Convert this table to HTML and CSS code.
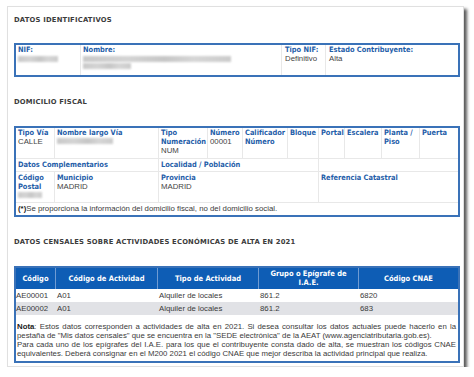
FILE: index.html
```html
<!DOCTYPE html>
<html lang="es">
<head>
<meta charset="utf-8">
<title>Datos censales</title>
<link rel="stylesheet" href="styles.css">
</head>
<body>
<div class="card">
  <h2 class="sec sec-first">DATOS IDENTIFICATIVOS</h2>
  <div class="box idbox">
    <div class="cell"><div class="lbl">NIF:</div><div class="val"><span class="blur b-nif"></span></div></div>
    <div class="cell"><div class="lbl">Nombre:</div><div class="val"><span class="blur b-nom1"></span><span class="blur b-nom2"></span></div></div>
    <div class="cell"><div class="lbl">Tipo NIF:</div><div class="val">Definitivo</div></div>
    <div class="cell"><div class="lbl">Estado Contribuyente:</div><div class="val">Alta</div></div>
  </div>

  <h2 class="sec">DOMICILIO FISCAL</h2>
  <div class="box dombox">
    <div class="cell top"><div class="lbl">Tipo Vía</div><div class="val">CALLE</div></div>
    <div class="cell top"><div class="lbl">Nombre largo Vía</div><div class="val"><span class="blur b-via"></span></div></div>
    <div class="cell top"><div class="lbl">Tipo<br>Numeración</div><div class="val">NUM</div></div>
    <div class="cell top"><div class="lbl">Número</div><div class="val">00001</div></div>
    <div class="cell top"><div class="lbl">Calificador<br>Número</div></div>
    <div class="cell top"><div class="lbl">Bloque</div></div>
    <div class="cell top"><div class="lbl">Portal</div></div>
    <div class="cell top"><div class="lbl">Escalera</div></div>
    <div class="cell top"><div class="lbl">Planta /<br>Piso</div></div>
    <div class="cell top"><div class="lbl">Puerta</div></div>

    <div class="cell span2"><div class="lbl">Datos Complementarios</div></div>
    <div class="cell span4"><div class="lbl">Localidad / Población</div></div>
    <div class="cell span4"></div>

    <div class="cell"><div class="lbl">Código<br>Postal</div><div class="val"><span class="blur b-cp"></span></div></div>
    <div class="cell"><div class="lbl">Municipio</div><div class="val">MADRID</div></div>
    <div class="cell span4"><div class="lbl">Provincia</div><div class="val">MADRID</div></div>
    <div class="cell span4"><div class="lbl">Referencia Catastral</div></div>

    <div class="cell span10 foot"><b>(*)</b>Se proporciona la información del domicilio fiscal, no del domicilio social.</div>
  </div>

  <h2 class="sec">DATOS CENSALES SOBRE ACTIVIDADES ECONÓMICAS DE ALTA EN 2021</h2>
  <div class="box censo">
    <div class="thead">
      <div class="th">Código</div>
      <div class="th">Código de Actividad</div>
      <div class="th">Tipo de Actividad</div>
      <div class="th">Grupo o Epígrafe de<br>I.A.E.</div>
      <div class="th">Código CNAE</div>
    </div>
    <div class="trow">
      <div class="td">AE00001</div>
      <div class="td">A01</div>
      <div class="td">Alquiler de locales</div>
      <div class="td">861.2</div>
      <div class="td">6820</div>
    </div>
    <div class="trow alt">
      <div class="td">AE00002</div>
      <div class="td">A01</div>
      <div class="td">Alquiler de locales</div>
      <div class="td">861.2</div>
      <div class="td">683</div>
    </div>
    <p class="nota"><b>Nota</b>: Estos datos corresponden a actividades de alta en 2021. Si desea consultar los datos actuales puede hacerlo en la pestaña de "Mis datos censales" que se encuentra en la "SEDE electrónica" de la AEAT (www.agenciatributaria.gob.es).<br>Para cada uno de los epígrafes del I.A.E. para los que el contribuyente consta dado de alta, se muestran los códigos CNAE equivalentes. Deberá consignar en el M200 2021 el código CNAE que mejor describa la actividad principal que realiza.</p>
  </div>
</div>
</body>
</html>
```

FILE: styles.css
```css
* { box-sizing: border-box; }

html, body {
  margin: 0;
  padding: 0;
  background: #ffffff;
}

body {
  font-family: "Liberation Sans", Arial, sans-serif;
  color: #3a3a3a;
}

.card {
  margin: 6px 0 0 7px;
  width: 457px;
  padding: 8px 3px 3px 6px;
  border: 1px solid #e0e0e0;
  background: #ffffff;
  box-shadow: 3px 3px 3px rgba(0, 0, 0, 0.65);
}

.sec {
  margin: 20px 0 19px 0;
  font-family: "DejaVu Sans", Verdana, sans-serif;
  font-weight: bold;
  font-size: 6.8px;
  letter-spacing: 0.2px;
  line-height: 10px;
  color: #3c3c3c;
}

.sec-first { margin-top: 0; margin-bottom: 18px; }

.box {
  width: 446px;
  border: 2px solid #3a72b8;
}

.lbl {
  font-family: "DejaVu Sans Condensed", "DejaVu Sans", Verdana, sans-serif;
  font-stretch: condensed;
  font-weight: bold;
  font-size: 7.4px;
  color: #1f5ea9;
  white-space: nowrap;
}

.val {
  font-size: 7.8px;
  color: #444444;
}

.blur {
  display: block;
  height: 6px;
  margin: 1.5px 0;
  background: linear-gradient(90deg, #c9c9c9 0%, #d4d4d4 30%, #c6c6c6 55%, #d6d6d6 75%, #cbcbcb 100%);
  filter: blur(1px);
}

/* Datos identificativos */
.idbox {
  display: grid;
  grid-template-columns: 64px 200px 43px 132px;
  column-gap: 1px;
  background: #e8e8e8;
}

.idbox .cell {
  background: #ffffff;
  padding: 0 2px 4px 2px;
  line-height: 9px;
}

.idbox .cell:nth-child(n+3) { padding-left: 3px; }

.b-nif { width: 40px; }
.b-nom1 { width: 148px; }
.b-nom2 { width: 48px; }

/* Domicilio fiscal */
.dombox {
  display: grid;
  grid-template-columns: 38px 103px 48px 34px 44px 30px 25px 36px 37px 38px;
  gap: 1px;
  background: #e8e8e8;
}

.dombox .cell {
  background: #ffffff;
  padding: 1px 1px 2px 2px;
  line-height: 9px;
}

.dombox .cell.top {
  padding-top: 0;
  padding-bottom: 3px;
}

.span2 { grid-column: span 2; }
.span4 { grid-column: span 4; }
.span10 { grid-column: span 10; }

.b-via { width: 56px; }
.b-cp { width: 24px; }

.dombox .foot {
  font-size: 7.8px;
  color: #3a3a3a;
}

.foot b { color: #222222; }

/* Datos censales */
.censo { background: #ffffff; }

.thead,
.trow {
  display: grid;
  grid-template-columns: 39px 101px 100px 99px 99px;
  column-gap: 1px;
}

.thead {
  background: #6f9bd3;
  height: 21px;
}

.th {
  display: flex;
  align-items: center;
  justify-content: center;
  text-align: center;
  background: #0e5db5;
  color: #ffffff;
  font-family: "DejaVu Sans Condensed", "DejaVu Sans", Verdana, sans-serif;
  font-stretch: condensed;
  font-weight: bold;
  font-size: 7.5px;
  line-height: 9px;
}

.trow {
  background: #ffffff;
  height: 13px;
}

.trow.alt { background: #e1e2e6; }

.td {
  padding-left: 1px;
  font-size: 7.8px;
  line-height: 13px;
  color: #3a3a3a;
  white-space: nowrap;
}

.trow .td:first-child { padding-left: 0; }

.nota {
  margin: 0;
  padding: 7px 2px 3px 1px;
  font-size: 7.8px;
  line-height: 9px;
  text-align: justify;
  color: #3a3a3a;
}

.nota b { color: #222222; }
```
